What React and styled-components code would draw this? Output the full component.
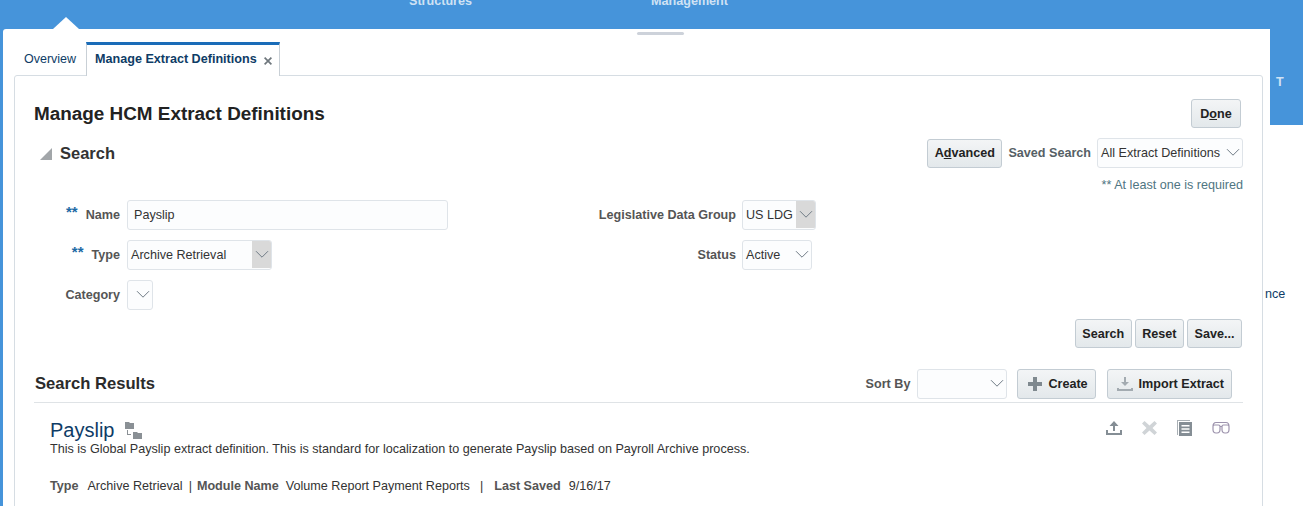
import React from 'react'
import styled, { createGlobalStyle } from 'styled-components'

const GlobalStyle = createGlobalStyle`
  html, body {
    margin: 0;
    padding: 0;
    height: 506px;
    overflow: hidden;
    background: #4694da;
    font-family: "Liberation Sans", Arial, sans-serif;
    font-size: 12.6px;
  }
  * {
    box-sizing: border-box;
  }
`

const Chevron = ({ size = 14 }) => (
  <svg width={size} height={size * 0.6} viewBox="0 0 14 8" fill="none" stroke="#6f7b85" strokeWidth="1">
    <path d="M1 1l6 6 6-6" />
  </svg>
)

const Select = ({ value, width, shaded }) => (
  <SelectBox $width={width}>
    <SelectValue>{value}</SelectValue>
    <SelectArrow $shaded={shaded}>
      <Chevron />
    </SelectArrow>
  </SelectBox>
)

function App() {
  return (
    <>
      <GlobalStyle />
      <Page>
        <Header>
          <NavItem $left={409}>Structures</NavItem>
          <NavItem $left={651}>Management</NavItem>
          <Notch />
        </Header>
        <Main>
          <Panel>
            <Handle />
            <Tabs>
              <Tab>Overview</Tab>
              <ActiveTab>
                Manage Extract Definitions
                <TabClose width="8" height="8" viewBox="0 0 8 8" stroke="#6f777d" strokeWidth="1.7">
                  <path d="M.6.6l6.800 6.800M7.400.6L.6 7.400" />
                </TabClose>
              </ActiveTab>
            </Tabs>
            <Card>
              <TitleRow>
                <Title>Manage HCM Extract Definitions</Title>
                <DoneButton>
                  D<u>o</u>ne
                </DoneButton>
              </TitleRow>

              <SearchRow>
                <SearchTitle>
                  <Disclosure />
                  Search
                </SearchTitle>
                <SearchTools>
                  <Button>
                    A<u>d</u>vanced
                  </Button>
                  <SavedLabel>Saved Search</SavedLabel>
                  <Select value="All Extract Definitions" width={146} />
                </SearchTools>
              </SearchRow>
              <Hint>** At least one is required</Hint>

              <Form>
                <FormColumn>
                  <FieldRow>
                    <Label>
                      <Required>**</Required>
                      Name
                    </Label>
                    <TextField readOnly value="Payslip" />
                  </FieldRow>
                  <FieldRow>
                    <Label>
                      <Required>**</Required>
                      Type
                    </Label>
                    <Select value="Archive Retrieval" width={145} shaded />
                  </FieldRow>
                  <FieldRow>
                    <Label>Category</Label>
                    <Select value="" width={26} />
                  </FieldRow>
                </FormColumn>
                <FormColumn $second>
                  <FieldRow $second>
                    <Label $second>Legislative Data Group</Label>
                    <Select value="US LDG" width={74} shaded />
                  </FieldRow>
                  <FieldRow $second>
                    <Label $second>Status</Label>
                    <Select value="Active" width={70} />
                  </FieldRow>
                </FormColumn>
              </Form>

              <FormActions>
                <Button>Search</Button>
                <Button>Reset</Button>
                <Button>Save...</Button>
              </FormActions>

              <ResultsHeader>
                <ResultsTitle>Search Results</ResultsTitle>
                <SortBy>Sort By</SortBy>
                <Select value="" width={90} />
                <IconButton>
                  <svg width="14" height="14" viewBox="0 0 14 14" fill="#7f898f">
                    <path d="M5 0h4v5h5v4H9v5H5V9H0V5h5z" />
                  </svg>
                  Create
                </IconButton>
                <IconButton $wide>
                  <svg width="16" height="14" viewBox="0 0 16 14" fill="#a3abb1">
                    <path d="M7 0h2v5h3L8 9 4 5h3zM0 11h2v1h12v-1h2v3H0z" />
                  </svg>
                  Import Extract
                </IconButton>
              </ResultsHeader>

              <Result>
                <ResultTop>
                  <ResultName>Payslip</ResultName>
                  <svg width="17" height="17" viewBox="0 0 17 17" fill="#8a9095">
                    <path d="M0 0h4l1 1h4v6H0zM8 10h4l1 1h4v6H8z" />
                    <path d="M2 8v5h4v-1H3V8z" />
                  </svg>
                  <ResultIcons>
                    <svg width="16" height="14" viewBox="0 0 16 14" fill="#858e95">
                      <path d="M8 0l4.500 5H9v5H7V5H3.500zM0 9h2v3h12V9h2v5H0z" />
                    </svg>
                    <svg width="15" height="14" viewBox="0 0 15 14" fill="#d0d4d7">
                      <path d="M2.500 0L7.500 4.500 12.500 0 15 2.500 10.500 7 15 11.500 12.500 14 7.500 9.500 2.500 14 0 11.500 4.500 7 0 2.500z" />
                    </svg>
                    <svg width="15" height="16" viewBox="0 0 15 16" fill="#858e95">
                      <path d="M0 0h13v1H1v14H0z" fill="#a9b0b5" />
                      <path fillRule="evenodd" d="M2 2h13v14H2zM4.500 5v1.500h8V5zM4.500 8.200v1.500h8V8.200zM4.500 11.400v1.500h8v-1.500z" />
                    </svg>
                    <svg width="18" height="13" viewBox="0 0 18 13" fill="none" stroke="#9d93ad" strokeWidth="1.2">
                      <path d="M1 5.500C1 3 2 1.500 4 1.500h10c2 0 3 1.500 3 4M1 5.500C1 4.500 1.500 4 2.500 4h4c1 0 1.500.5 1.500 1.500v3C8 10.800 7 12 5 12H4c-2 0-3-1.200-3-3.500zM17 5.500c0-1-.5-1.500-1.500-1.500h-4c-1 0-1.500.5-1.500 1.500v3c0 2.300 1 3.500 3 3.500h1c2 0 3-1.200 3-3.500zM8 5.500h2" />
                    </svg>
                  </ResultIcons>
                </ResultTop>
                <Description>
                  This is Global Payslip extract definition. This is standard for localization to generate Payslip based
                  on Payroll Archive process.
                </Description>
                <Meta>
                  <MetaLabel $gap={9}>Type</MetaLabel>
                  <span>Archive Retrieval</span>
                  <MetaBar $left={6} $right={5}>|</MetaBar>
                  <MetaLabel $gap={7}>Module Name</MetaLabel>
                  <span>Volume Report Payment Reports</span>
                  <MetaBar $left={10} $right={11}>|</MetaBar>
                  <MetaLabel $gap={8}>Last Saved</MetaLabel>
                  <span>9/16/17</span>
                </Meta>
              </Result>
            </Card>
          </Panel>
          <Side>
            <SideBlue>T</SideBlue>
            <SideWhite>
              <SideLink>nce</SideLink>
            </SideWhite>
          </Side>
        </Main>
      </Page>
    </>
  )
}

export default App

const Page = styled.div`
  width: 1303px;
  height: 506px;
  display: flex;
  flex-direction: column;
  overflow: hidden;
  background: #4694da;
`

const Header = styled.header`
  position: relative;
  height: 29px;
  flex: none;
`

const NavItem = styled.span`
  position: absolute;
  left: ${(props) => props.$left}px;
  top: -6px;
  font-size: 12.6px;
  line-height: 14px;
  font-weight: bold;
  color: #cfe2f4;
`

const Notch = styled.div`
  position: absolute;
  left: 53px;
  bottom: 0;
  width: 0;
  height: 0;
  border-left: 13px solid transparent;
  border-right: 13px solid transparent;
  border-bottom: 12px solid #fff;
`

const Main = styled.main`
  flex: 1;
  display: flex;
  min-height: 0;
  padding-left: 3px;
`

const Panel = styled.section`
  position: relative;
  width: 1267px;
  background: #fff;
  border-top-left-radius: 3px;
  padding: 13px 7px 0 11px;
`

const Handle = styled.div`
  position: absolute;
  left: 634px;
  top: 3px;
  width: 47px;
  height: 3px;
  border-radius: 2px;
  background: #cdd2da;
`

const Tabs = styled.nav`
  display: flex;
  align-items: flex-end;
  height: 34px;
  margin-bottom: -1px;
  position: relative;
  z-index: 1;
`

const Tab = styled.div`
  width: 72px;
  height: 33px;
  padding-left: 10px;
  line-height: 33px;
  font-size: 12.5px;
  color: #0e3c66;
`

const ActiveTab = styled.div`
  width: 194px;
  height: 34px;
  padding-left: 8px;
  line-height: 29px;
  font-size: 12.6px;
  font-weight: bold;
  white-space: nowrap;
  color: #0e3c66;
  background: #fff;
  border-top: 3px solid #1a6cb8;
  border-left: 1px solid #c9d0d6;
  border-right: 1px solid #c9d0d6;
`

const TabClose = styled.svg`
  margin-left: 7px;
  vertical-align: -2px;
`

const Card = styled.div`
  height: 500px;
  border: 1px solid #d6dde3;
  border-radius: 3px 3px 0 0;
  padding: 23px 19px 0 19px;
`

const TitleRow = styled.div`
  display: flex;
  align-items: center;
  justify-content: space-between;
  height: 29px;
  padding-right: 2px;
`

const Title = styled.h1`
  margin: 0;
  font-size: 18.9px;
  font-weight: bold;
  color: #222;
`

const Button = styled.button`
  height: 29px;
  padding: 0 6.5px;
  font-family: inherit;
  font-size: 12.6px;
  font-weight: bold;
  white-space: nowrap;
  color: #222;
  background: linear-gradient(#f3f5f6, #e3e8eb);
  border: 1px solid #c3ccd3;
  border-radius: 3px;
`

const DoneButton = styled(Button)`
  width: 50px;
  padding: 0;
`

const SearchRow = styled.div`
  display: flex;
  align-items: center;
  justify-content: space-between;
  height: 30px;
  margin-top: 10px;
`

const SearchTitle = styled.h2`
  display: flex;
  align-items: center;
  margin: 1px 0 0 6px;
  font-size: 16.5px;
  font-weight: bold;
  color: #333;
`

const Disclosure = styled.span`
  width: 0;
  height: 0;
  margin-right: 8px;
  border-left: 12px solid transparent;
  border-bottom: 12px solid #a2a6a9;
`

const SearchTools = styled.div`
  display: flex;
  align-items: center;
`

const SavedLabel = styled.span`
  margin: 0 6px 0 6px;
  font-weight: bold;
  color: #565f66;
`

const SelectBox = styled.div`
  flex: none;
  width: ${(props) => props.$width}px;
  height: 30px;
  display: flex;
  background: #fcfdfe;
  border: 1px solid #dfe4e9;
  border-radius: 3px;
  overflow: hidden;
`

const SelectValue = styled.span`
  flex: 1;
  min-width: 0;
  padding-left: 3px;
  line-height: 28px;
  font-size: 12.6px;
  white-space: nowrap;
  color: #333;
`

const SelectArrow = styled.span`
  flex: none;
  width: 19px;
  margin-bottom: 1px;
  display: flex;
  align-items: center;
  justify-content: center;
  background: ${(props) => (props.$shaded ? '#d9d9d9' : 'transparent')};
`

const Hint = styled.div`
  height: 14px;
  margin-top: 10px;
  text-align: right;
  font-size: 12.6px;
  line-height: 14px;
  color: #4f7582;
`

const Form = styled.div`
  display: flex;
  margin-top: 8px;
  margin-left: -19px;
`

const FormColumn = styled.div`
  display: flex;
  flex-direction: column;
  gap: 10px;
  width: ${(props) => (props.$second ? 'auto' : '614px')};
`

const FieldRow = styled.div`
  display: flex;
  align-items: center;
  gap: ${(props) => (props.$second ? '6px' : '7px')};
`

const Label = styled.label`
  width: ${(props) => (props.$second ? '107px' : '105px')};
  flex: none;
  white-space: nowrap;
  display: flex;
  justify-content: flex-end;
  font-size: 12.6px;
  font-weight: bold;
  color: #555;
`

const Required = styled.span`
  margin: -2px 8px 0 0;
  font-size: 15px;
  font-weight: bold;
  line-height: 12px;
  color: #1d6aa5;
`

const TextField = styled.input`
  width: 321px;
  height: 30px;
  padding: 0 6px;
  font-family: inherit;
  font-size: 12.6px;
  color: #333;
  background: #fcfdfe;
  border: 1px solid #dfe4e9;
  border-radius: 3px;
  outline: none;
`

const FormActions = styled.div`
  display: flex;
  justify-content: flex-end;
  gap: 3px;
  margin-top: 9px;
  padding-right: 1px;
`

const ResultsHeader = styled.div`
  display: flex;
  align-items: center;
  height: 34px;
  margin-top: 21px;
  padding: 0 11px 4px 1px;
  border-bottom: 1px solid #dfe3e6;
`

const ResultsTitle = styled.h2`
  flex: 1;
  margin: 1px 0 0;
  font-size: 16.6px;
  font-weight: bold;
  color: #2b2b2b;
`

const SortBy = styled.span`
  margin-right: 7px;
  font-weight: bold;
  color: #555;
`

const IconButton = styled(Button)`
  height: 30px;
  margin-left: ${(props) => (props.$wide ? '11px' : '10px')};
  padding: 0 7px 0 ${(props) => (props.$wide ? '9px' : '10px')};
  display: flex;
  align-items: center;
  gap: 6px;
`

const Result = styled.article`
  padding: 15px 0 0 16px;
`

const ResultTop = styled.div`
  display: flex;
  align-items: center;
  gap: 11px;
  height: 23px;
  padding-top: 1px;
`

const ResultName = styled.span`
  font-size: 20px;
  color: #0e3c66;
`

const ResultIcons = styled.div`
  margin: 0 0 5px auto;
  display: flex;
  align-items: center;
  gap: 20px;
  padding-right: 13px;
`

const Description = styled.p`
  margin: 0;
  font-size: 12.6px;
  line-height: 16px;
  color: #333;
`

const Meta = styled.div`
  display: flex;
  margin-top: 21px;
  font-size: 12.6px;
  line-height: 16px;
  color: #333;
`

const MetaLabel = styled.b`
  margin-right: ${(props) => props.$gap}px;
  color: #555;
`

const MetaBar = styled.span`
  margin: 0 ${(props) => props.$right}px 0 ${(props) => props.$left}px;
`

const Side = styled.aside`
  flex: 1;
  display: flex;
  flex-direction: column;
`

const SideBlue = styled.div`
  height: 96px;
  padding: 46px 0 0 6px;
  font-size: 12.6px;
  font-weight: bold;
  color: #cfe2f4;
`

const SideWhite = styled.div`
  position: relative;
  flex: 1;
  background: #fff;
`

const SideLink = styled.span`
  position: absolute;
  left: -5px;
  top: 162px;
  font-size: 12.6px;
  color: #0e3c66;
`
